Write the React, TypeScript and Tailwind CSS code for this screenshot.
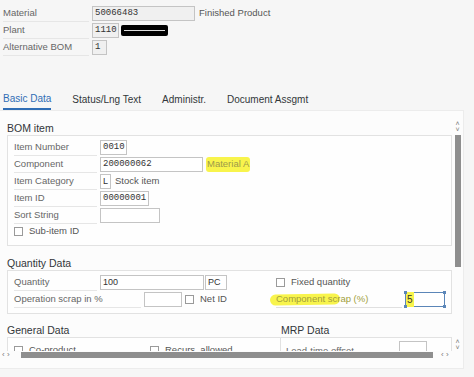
import React from "react";

const sans = { fontFamily: '"Liberation Sans", Arial, sans-serif' };

function Field({
  value = "",
  w,
  ro = false,
  mono = true,
}: {
  value?: string;
  w: number;
  ro?: boolean;
  mono?: boolean;
}) {
  return (
    <div
      className={`h-[15px] border border-[#c4c4c4] px-[2px] flex items-center text-[9px] text-[#333] leading-none ${
        ro ? "bg-[#f0f0f0]" : "bg-white"
      } ${mono ? "font-['Liberation_Mono',monospace]" : ""}`}
      style={{ width: w }}
    >
      {value}
    </div>
  );
}

function Check({ label }: { label: string }) {
  return (
    <div className="flex items-center gap-[6px] text-[9.5px] text-[#555] whitespace-nowrap">
      <div className="w-[9px] h-[9px] border border-[#9a9a9a] bg-white shrink-0" />
      <span>{label}</span>
    </div>
  );
}

function Row({
  label,
  lw = 86,
  children,
}: {
  label: string;
  lw?: number;
  children?: React.ReactNode;
}) {
  return (
    <div className="h-[17px] flex items-center">
      <div
        className="h-full flex items-center border-b border-[#e6e6e6] text-[9.5px] text-[#666] mr-[3px] whitespace-nowrap"
        style={{ width: lw }}
      >
        {label}
      </div>
      {children}
    </div>
  );
}

export default function App() {
  return (
    <div className="w-[474px] h-[377px] bg-[#f6f6f6] overflow-hidden" style={sans}>
      {/* header */}
      <div className="pt-[5px] pl-[3px]">
        <Row label="Material">
          <Field value="50066483" w={103} ro />
          <span className="ml-[4px] text-[9.5px] text-[#555]">Finished Product</span>
        </Row>
        <Row label="Plant">
          <Field value="1110" w={27} ro />
          <div className="ml-[2px] w-[47px] h-[11px] bg-black rounded-[2px] flex items-center px-[3px]">
            <div className="h-[1px] w-full bg-[#ddd]" />
          </div>
        </Row>
        <Row label="Alternative BOM">
          <Field value="1" w={15} ro />
        </Row>
      </div>

      {/* tabs */}
      <div className="mt-[32px] h-[22px] pl-[3px] flex gap-[21px] text-[10px] text-[#32363a]">
        <div className="h-full flex items-center border-b-2 border-[#2f6db5] text-[#2f6db5]">Basic Data</div>
        <div className="h-full flex items-center">Status/Lng Text</div>
        <div className="h-full flex items-center">Administr.</div>
        <div className="h-full flex items-center">Document Assgmt</div>
      </div>

      {/* panel */}
      <div className="w-[464px] h-[259px] bg-[#fcfcfc] border-t border-r border-b border-[#ececec] flex flex-col">
        <div className="h-[240px] flex overflow-hidden">
          <div className="flex-1 pl-[7px] pt-[11px] overflow-hidden">
            <div className="h-[13px] text-[10.5px] text-[#32363a] flex items-center">BOM item</div>
            <div className="w-[445px] h-[111px] border border-[#e2e2e2] bg-[#fefefe] pl-[6px] pt-[3px]">
              <Row label="Item Number" lw={83}>
                <Field value="0010" w={27} />
              </Row>
              <Row label="Component" lw={83}>
                <Field value="200000062" w={103} />
                <span className="ml-[3px] px-[1px] bg-[#f8f44c] rounded-[3px] text-[9.5px] text-[#9c9a4a]">Material A</span>
              </Row>
              <Row label="Item Category" lw={83}>
                <Field value="L" w={11} mono={false} />
                <span className="ml-[4px] text-[9.5px] text-[#555]">Stock item</span>
              </Row>
              <Row label="Item ID" lw={83}>
                <Field value="00000001" w={49} />
              </Row>
              <Row label="Sort String" lw={83}>
                <Field w={60} />
              </Row>
              <div className="h-[15px] flex items-center">
                <Check label="Sub-item ID" />
              </div>
            </div>

            <div className="mt-[11px] h-[13px] text-[10.5px] text-[#32363a] flex items-center">Quantity Data</div>
            <div className="w-[445px] h-[44px] border border-[#e2e2e2] bg-[#fefefe] pl-[6px] pt-[3px] flex">
              <div className="w-[262px]">
                <Row label="Quantity" lw={83}>
                  <Field value="100" w={104} mono={false} />
                  <div className="ml-[1px]">
                    <Field value="PC" w={22} mono={false} />
                  </div>
                </Row>
                <Row label="Operation scrap in %" lw={127}>
                  <Field w={38} />
                  <div className="ml-[3px]">
                    <Check label="Net ID" />
                  </div>
                </Row>
              </div>
              <div className="flex-1">
                <div className="h-[17px] flex items-center">
                  <Check label="Fixed quantity" />
                </div>
                <div className="h-[17px] flex items-center">
                  <div className="w-[126px] h-full flex items-center border-b border-[#e0e0e0] mr-[3px] relative">
                    <div className="absolute left-[-6px] top-[3px] w-[70px] h-[11px] bg-[#f8f44c] rounded-full -rotate-1" />
                    <span className="relative text-[9.5px] text-[#a29e3c]">Component scrap (%)</span>
                  </div>
                  <div className="relative">
                    <div className="h-[15px] w-[40px] border border-[#5b86b8] bg-white flex items-center text-[10px] text-[#333]">
                      <span className="bg-[#f8f44c] px-[1px]">5</span>
                    </div>
                    <div className="absolute left-[-1px] top-[-1px] w-[3px] h-[3px] bg-[#5b86b8]" />
                    <div className="absolute right-[-1px] top-[-1px] w-[3px] h-[3px] bg-[#5b86b8]" />
                    <div className="absolute left-[-1px] bottom-[-1px] w-[3px] h-[3px] bg-[#5b86b8]" />
                    <div className="absolute right-[-1px] bottom-[-1px] w-[3px] h-[3px] bg-[#5b86b8]" />
                  </div>
                </div>
              </div>
            </div>

            <div className="mt-[10px] flex w-[445px]">
              <div className="w-[273px]">
                <div className="h-[13px] text-[10.5px] text-[#32363a] flex items-center">General Data</div>
                <div className="h-[20px] border-t border-l border-[#e2e2e2] bg-[#fefefe] pl-[6px] pt-[5px] flex">
                  <div className="w-[136px]">
                    <Check label="Co-product" />
                  </div>
                  <Check label="Recurs. allowed" />
                </div>
              </div>
              <div className="flex-1">
                <div className="h-[13px] pl-[1px] text-[10.5px] text-[#32363a] flex items-center">MRP Data</div>
                <div className="h-[20px] border-t border-l border-r border-[#e2e2e2] bg-[#fefefe] pl-[5px] pt-[3px] flex">
                  <div className="w-[113px] h-[17px] flex items-end text-[9.5px] text-[#666] whitespace-nowrap">Lead-time offset</div>
                  <Field w={28} />
                </div>
              </div>
            </div>
          </div>

          {/* vertical scrollbar */}
          <div className="w-[11px] pt-[10px] flex flex-col items-center">
            <span className="text-[7px] leading-[5px] text-[#777]">˄</span>
            <span className="text-[7px] leading-[5px] text-[#777] mt-[1px]">˅</span>
            <div className="mt-[3px] w-[6px] h-[132px] bg-[#8e8e8e]" />
            <div className="mt-[72px] text-[7px] leading-[5px] text-[#777]">˄</div>
            <span className="text-[7px] leading-[5px] text-[#777] mt-[1px]">˅</span>
          </div>
        </div>

        {/* horizontal scrollbar */}
        <div className="h-[8px] flex items-center pl-[2px]">
          <span className="w-[19px] text-[8px] text-[#777] leading-none">‹ ›</span>
          <div className="w-[412px] h-[6px] bg-[#8e8e8e]" />
          <span className="ml-[8px] text-[8px] text-[#777] leading-none">‹ ›</span>
        </div>
      </div>
    </div>
  );
}
